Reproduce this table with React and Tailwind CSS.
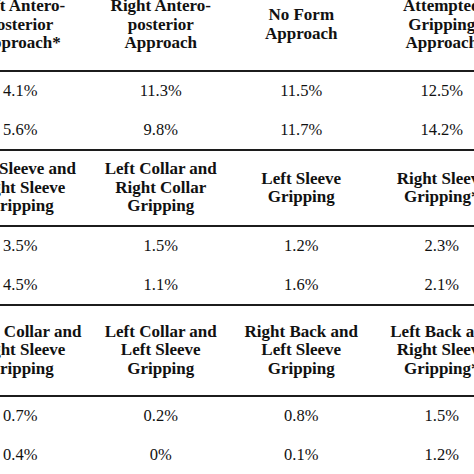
import React from "react";

const sections = [
  {
    headerBox: "h-[73px] -mt-[3px] pb-[17.5px]",
    headers: [
      ["Left Antero-", "posterior", "Approach*"],
      ["Right Antero-", "posterior", "Approach"],
      ["No Form", "Approach"],
      ["Attempted", "Gripping", "Approach"],
    ],
    rows: [
      ["4.1%", "11.3%", "11.5%", "12.5%"],
      ["5.6%", "9.8%", "11.7%", "14.2%"],
    ],
  },
  {
    headerBox: "h-[74px]",
    headers: [
      ["Left Sleeve and", "Right Sleeve", "Gripping"],
      ["Left Collar and", "Right Collar", "Gripping"],
      ["Left Sleeve", "Gripping"],
      ["Right Sleeve", "Gripping*"],
    ],
    rows: [
      ["3.5%", "1.5%", "1.2%", "2.3%"],
      ["4.5%", "1.1%", "1.6%", "2.1%"],
    ],
  },
  {
    headerBox: "h-[89px]",
    headers: [
      ["Right Collar and", "Right Sleeve", "Gripping"],
      ["Left Collar and", "Left Sleeve", "Gripping"],
      ["Right Back and", "Left Sleeve", "Gripping"],
      ["Left Back and", "Right Sleeve", "Gripping*"],
    ],
    rows: [
      ["0.7%", "0.2%", "0.8%", "1.5%"],
      ["0.4%", "0%", "0.1%", "1.2%"],
    ],
  },
];

function Rule() {
  return <div className="h-[2px] w-full bg-[#1c1c1c]" />;
}

export default function App() {
  return (
    <div
      className="w-[474px] h-[474px] overflow-hidden bg-white text-[#111] text-[16.5px] leading-[18.5px]"
      style={{ fontFamily: '"Liberation Serif", "Times New Roman", serif' }}
    >
      <div className="w-[562px] ml-[-50px] flex flex-col">
        {sections.map((s, si) => (
          <div key={si} className="flex flex-col">
            {si > 0 && <Rule />}
            <div className={`grid grid-cols-[repeat(4,140.5px)] ${s.headerBox}`}>
              {s.headers.map((h, hi) => (
                <div key={hi} className="flex items-center justify-center">
                  <div className="flex flex-col items-center font-bold text-[17px] whitespace-nowrap">
                    {h.map((line, li) => (
                      <span key={li}>{line}</span>
                    ))}
                  </div>
                </div>
              ))}
            </div>
            <Rule />
            {s.rows.map((r, ri) => (
              <div
                key={ri}
                className="grid grid-cols-[repeat(4,140.5px)] h-[38.5px] items-center"
              >
                {r.map((v, vi) => (
                  <div key={vi} className="text-center whitespace-nowrap">
                    {v}
                  </div>
                ))}
              </div>
            ))}
          </div>
        ))}
      </div>
    </div>
  );
}
